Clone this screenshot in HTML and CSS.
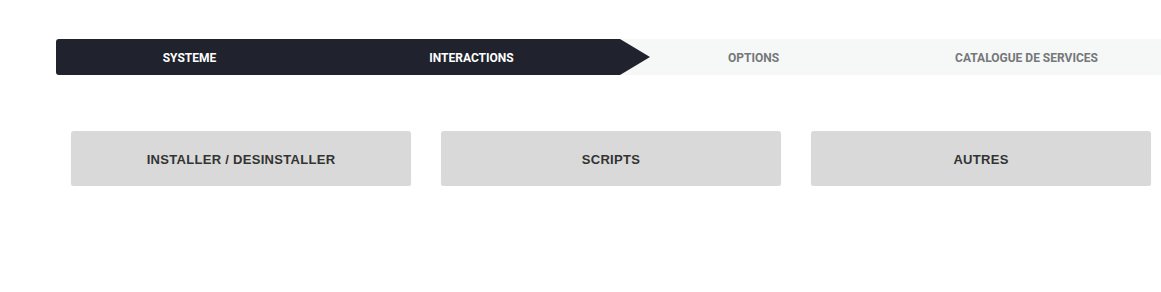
FILE: index.html
```html
<!DOCTYPE html>
<html lang="fr">
<head>
<meta charset="utf-8">
<title>Interactions</title>
<link rel="stylesheet" href="styles.css">
</head>
<body>
<div class="page">
  <div class="stepper">
    <div class="step done"><span>SYSTEME</span></div>
    <div class="step done current"><span>INTERACTIONS</span></div>
    <div class="step"><span>OPTIONS</span></div>
    <div class="step"><span>CATALOGUE DE SERVICES</span></div>
  </div>
  <div class="actions">
    <button class="action">INSTALLER / DESINSTALLER</button>
    <button class="action">SCRIPTS</button>
    <button class="action">AUTRES</button>
  </div>
</div>
</body>
</html>
```
FILE: styles.css
```css
html, body {
  margin: 0;
  padding: 0;
  background: #ffffff;
  overflow: hidden;
}
.page {
  width: 1110px;
  margin-left: 56px;
  padding-top: 39px;
}
.stepper {
  display: grid;
  grid-template-columns: 282px 282px 282px 1fr;
  height: 36px;
  background: #f6f8f8;
  font-family: Roboto, "Liberation Sans", sans-serif;
  font-weight: 700;
  font-size: 12px;
}
.step {
  position: relative;
  display: flex;
  align-items: center;
  justify-content: center;
  padding-right: 15px;
  padding-top: 1px;
  color: #757779;
}
.step.done {
  background: #20222d;
  color: #ffffff;
}
.step:first-child {
  border-radius: 3px 0 0 3px;
}
.step.current::after {
  content: "";
  position: absolute;
  right: -30px;
  top: 0;
  width: 0;
  height: 0;
  border-top: 18px solid transparent;
  border-bottom: 18px solid transparent;
  border-left: 30px solid #20222d;
}
.actions {
  display: grid;
  grid-template-columns: repeat(3, 340px);
  column-gap: 30px;
  padding: 0 15px;
  margin-top: 56px;
}
.action {
  height: 55px;
  border: none;
  border-radius: 3px;
  background: #d9d9d9;
  box-shadow: 0 1px 1px rgba(0, 0, 0, 0.08);
  font-family: "Liberation Sans", Arial, sans-serif;
  font-weight: 700;
  font-size: 13px;
  letter-spacing: 0.3px;
  color: #333333;
  padding: 2px 0 0 0;
}
```
